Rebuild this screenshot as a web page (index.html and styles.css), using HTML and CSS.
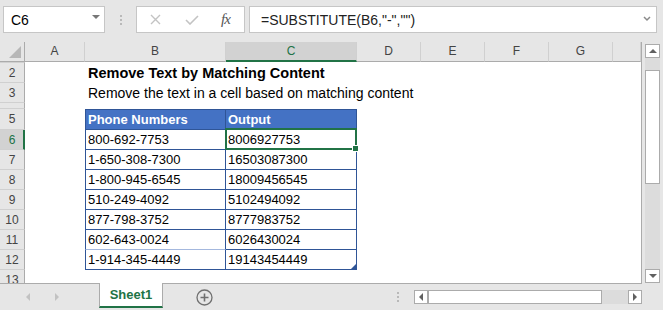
FILE: index.html
```html
<!DOCTYPE html>
<html lang="en">
<head>
    <meta charset="UTF-8">
    <meta name="viewport" content="width=device-width, initial-scale=1.0">
    <title>Remove Text by Matching Content</title>
    <link rel="stylesheet" href="styles.css">
</head>
<body>
    <div class="workbook">
        <!-- Name box + formula bar -->
        <div class="formula-bar">
            <div class="name-box">
                <span class="name-text">C6</span>
                <span class="caret-down"></span>
            </div>
            <div class="grip"><i></i><i></i><i></i></div>
            <div class="fx-buttons">
                <svg class="icon-cancel" width="11" height="11" viewBox="0 0 11 11">
                    <path d="M1 1 L10 10 M10 1 L1 10" stroke="#c3c3c3" stroke-width="1.4" fill="none"/>
                </svg>
                <svg class="icon-enter" width="14" height="10" viewBox="0 0 14 10">
                    <path d="M1 5 L5 9 L13 1" stroke="#c3c3c3" stroke-width="1.6" fill="none"/>
                </svg>
                <span class="fx">fx</span>
            </div>
            <div class="formula-input">
                <span class="formula-text">=SUBSTITUTE(B6,"-","")</span>
                <svg class="icon-expand" width="8" height="6" viewBox="0 0 8 6">
                    <path d="M1 1 L4 4 L7 1" stroke="#8a8a8a" stroke-width="1.5" fill="none"/>
                </svg>
            </div>
        </div>

        <!-- Worksheet -->
        <div class="sheet-area">
            <div class="grid">
                <div class="corner"><span class="corner-mark"></span></div>
                <div class="col-head">A</div>
                <div class="col-head">B</div>
                <div class="col-head selected">C</div>
                <div class="col-head">D</div>
                <div class="col-head">E</div>
                <div class="col-head">F</div>
                <div class="col-head">G</div>
                <div class="col-head"></div>

                <div class="row-head"></div>

                <div class="row-head">2</div>
                <div class="cell title">Remove Text by Matching Content</div>

                <div class="row-head">3</div>
                <div class="cell subtitle">Remove the text in a cell based on matching content</div>

                <div class="row-head"></div>

                <div class="row-head">5</div>
                <div class="tc th col-b">Phone Numbers</div>
                <div class="tc th">Output</div>

                <div class="row-head selected">6</div>
                <div class="tc col-b">800-692-7753</div>
                <div class="tc active">8006927753</div>

                <div class="row-head">7</div>
                <div class="tc col-b">1-650-308-7300</div>
                <div class="tc">16503087300</div>

                <div class="row-head">8</div>
                <div class="tc col-b">1-800-945-6545</div>
                <div class="tc">18009456545</div>

                <div class="row-head">9</div>
                <div class="tc col-b">510-249-4092</div>
                <div class="tc">5102494092</div>

                <div class="row-head">10</div>
                <div class="tc col-b">877-798-3752</div>
                <div class="tc">8777983752</div>

                <div class="row-head">11</div>
                <div class="tc col-b light-line">602-643-0024</div>
                <div class="tc">6026430024</div>

                <div class="row-head">12</div>
                <div class="tc col-b">1-914-345-4449</div>
                <div class="tc last">19143454449</div>

                <div class="row-head">13</div>
            </div>

            <div class="vscroll">
                <div class="sb-btn"><span class="tri-up"></span></div>
                <div class="vthumb"></div>
                <div class="sb-space"></div>
                <div class="sb-btn"><span class="tri-down"></span></div>
            </div>
        </div>

        <!-- Sheet tabs -->
        <div class="tab-bar">
            <div class="tab-nav">
                <span class="nav-left"></span>
                <span class="nav-right"></span>
            </div>
            <div class="sheet-tab">Sheet1</div>
            <svg class="add-sheet" width="17" height="17" viewBox="0 0 17 17">
                <circle cx="8.5" cy="8.5" r="7.5" stroke="#707070" stroke-width="1.3" fill="none"/>
                <path d="M8.5 4.5 V12.5 M4.5 8.5 H12.5" stroke="#707070" stroke-width="1.6"/>
            </svg>
            <div class="grip tab-grip"><i></i><i></i><i></i></div>
            <div class="hscroll">
                <div class="sb-btn"><span class="tri-left"></span></div>
                <div class="hthumb"></div>
                <div class="sb-space"></div>
                <div class="sb-btn"><span class="tri-right"></span></div>
            </div>
        </div>
    </div>
</body>
</html>
```

FILE: styles.css
```css
body {
    margin: 0;
    background: #e6e6e6;
    font-family: "Liberation Sans", Arial, sans-serif;
    color: #000;
}
.workbook {
    width: 663px;
    height: 310px;
    display: flex;
    flex-direction: column;
    overflow: hidden;
}

/* formula bar */
.formula-bar {
    height: 42px;
    display: flex;
    align-items: flex-start;
    padding-top: 6px;
    box-sizing: border-box;
}
.name-box {
    margin-left: 3px;
    width: 102px;
    height: 27px;
    box-sizing: border-box;
    border: 1px solid #c6c6c6;
    background: #fff;
    display: flex;
    font-size: 14px;
}
.name-text {
    padding: 3px 0 0 7px;
    line-height: 21px;
}
.caret-down {
    margin: 8px 4px 0 auto;
    width: 0;
    height: 0;
    border-left: 4px solid transparent;
    border-right: 4px solid transparent;
    border-top: 4px solid #777;
}
.grip {
    display: flex;
    flex-direction: column;
    gap: 2px;
    margin: 9px 14px 0 15px;
}
.grip i {
    display: block;
    width: 2px;
    height: 2px;
    background: #b9b9b9;
}
.fx-buttons {
    width: 109px;
    height: 27px;
    box-sizing: border-box;
    border: 1px solid #c6c6c6;
    background: #fff;
    display: flex;
    align-items: center;
    padding-left: 13px;
}
.icon-enter {
    margin-left: 24px;
}
.fx {
    margin-left: 22px;
    font-family: "Liberation Serif", serif;
    font-style: italic;
    font-size: 15px;
    color: #555;
    letter-spacing: -1px;
}
.formula-input {
    margin-left: 4px;
    width: 408px;
    height: 27px;
    box-sizing: border-box;
    border: 1px solid #c6c6c6;
    background: #fff;
    display: flex;
    font-size: 14px;
    color: #222;
}
.formula-text {
    padding: 3px 0 0 11px;
    line-height: 21px;
}
.icon-expand {
    margin: 9px 5px 0 auto;
}

/* worksheet grid */
.sheet-area {
    height: 242px;
    display: flex;
    align-items: flex-start;
}
.grid {
    width: 642px;
    height: 242px;
    box-sizing: border-box;
    border-right: 1px solid #ababab;
    border-bottom: 1px solid #ababab;
    background: #fff;
    overflow: hidden;
    display: grid;
    grid-template-columns: 25px 60px 141px 131px 64px 64px 64px 64px 28px;
    grid-template-rows: 20px 1px 20px 20px 6px 21px repeat(7, 20px) 20px;
    align-content: start;
}
.corner, .col-head, .row-head {
    background: #e6e6e6;
    box-sizing: border-box;
    color: #444;
    font-size: 12px;
    text-align: center;
}
.corner {
    border-right: 1px solid #ababab;
    border-bottom: 1px solid #ababab;
    position: relative;
}
.corner-mark {
    position: absolute;
    right: 3px;
    bottom: 3px;
    width: 0;
    height: 0;
    border-left: 12px solid transparent;
    border-bottom: 12px solid #b7b7b7;
}
.col-head {
    border-right: 1px solid #d0d0d0;
    border-bottom: 1px solid #ababab;
    line-height: 19px;
}
.col-head.selected {
    background: #d2d2d2;
    border-bottom: 2px solid #217346;
    color: #217346;
}
.row-head {
    grid-column: 1;
    border-right: 1px solid #ababab;
    border-bottom: 1px solid #d0d0d0;
    line-height: 20px;
    overflow: hidden;
}
.row-head.selected {
    background: #d2d2d2;
    border-right: 2px solid #217346;
    color: #217346;
    padding-left: 1px;
}
.cell {
    grid-column: 3 / -1;
    padding-left: 3px;
    white-space: nowrap;
    line-height: 20px;
}
.title {
    font-weight: bold;
    font-size: 14.5px;
}
.subtitle {
    font-size: 14px;
}

/* table */
.tc {
    box-sizing: border-box;
    border-right: 1px solid #2f5597;
    border-bottom: 1px solid #2f5597;
    padding-left: 2px;
    font-size: 13px;
    line-height: 19px;
    white-space: nowrap;
}
.tc.col-b {
    grid-column: 3;
    border-left: 1px solid #2f5597;
}
.th {
    border-top: 1px solid #2f5597;
    background: #4472c4;
    color: #fff;
    font-weight: bold;
}
.th:last-child {
    border-right-color: #2f5597;
}
.tc.light-line {
    border-bottom-color: #a4b8de;
}
.tc.active {
    position: relative;
}
.tc.active::after {
    content: "";
    position: absolute;
    top: -2px;
    left: -1px;
    right: -1px;
    bottom: -1px;
    border: 2px solid #217346;
}
.tc.active::before {
    content: "";
    position: absolute;
    right: -3px;
    bottom: -3px;
    width: 5px;
    height: 5px;
    background: #217346;
    border: 1px solid #fff;
    z-index: 2;
}
.tc.last {
    position: relative;
}
.tc.last::after {
    content: "";
    position: absolute;
    right: 0;
    bottom: 0;
    width: 0;
    height: 0;
    border-left: 5px solid transparent;
    border-bottom: 5px solid #2f5597;
}

/* scrollbars */
.vscroll {
    width: 15px;
    height: 239px;
    margin: 2px 0 0 3px;
    display: flex;
    flex-direction: column;
    background: #dcdcdc;
}
.sb-btn {
    width: 15px;
    height: 14px;
    box-sizing: border-box;
    border: 1px solid #ababab;
    background: #fff;
    display: flex;
    align-items: center;
    justify-content: center;
}
.vthumb {
    margin-top: 12px;
    height: 114px;
    box-sizing: border-box;
    border: 1px solid #ababab;
    background: #fff;
}
.sb-space {
    flex: 1;
}
.tri-up, .tri-down {
    width: 0;
    height: 0;
    border-left: 4px solid transparent;
    border-right: 4px solid transparent;
}
.tri-up {
    border-bottom: 4px solid #606060;
}
.tri-down {
    border-top: 4px solid #606060;
}
.tri-left, .tri-right {
    width: 0;
    height: 0;
    border-top: 4px solid transparent;
    border-bottom: 4px solid transparent;
}
.tri-left {
    border-right: 4px solid #606060;
}
.tri-right {
    border-left: 4px solid #606060;
}

/* sheet tabs */
.tab-bar {
    height: 26px;
    display: flex;
    align-items: center;
}
.tab-nav {
    width: 99px;
    display: flex;
    align-items: center;
}
.nav-left, .nav-right {
    width: 0;
    height: 0;
    border-top: 4px solid transparent;
    border-bottom: 4px solid transparent;
}
.nav-left {
    margin-left: 26px;
    border-right: 4px solid #c2c2c2;
}
.nav-right {
    margin-left: 25px;
    border-left: 4px solid #c2c2c2;
}
.sheet-tab {
    align-self: flex-start;
    margin-top: -1px;
    width: 64px;
    height: 25px;
    box-sizing: border-box;
    background: #fff;
    border-left: 1px solid #ababab;
    border-right: 1px solid #ababab;
    border-bottom: 2px solid #217346;
    color: #217346;
    font-weight: bold;
    font-size: 13px;
    text-align: center;
    line-height: 24px;
}
.add-sheet {
    margin-left: 33px;
}
.tab-grip {
    margin: 0 0 0 184px;
}
.hscroll {
    margin-left: 15px;
    width: 228px;
    height: 14px;
    display: flex;
    background: #dcdcdc;
}
.hscroll .sb-btn {
    width: 14px;
    height: 14px;
}
.hthumb {
    width: 174px;
    box-sizing: border-box;
    border: 1px solid #ababab;
    background: #fff;
}
```
